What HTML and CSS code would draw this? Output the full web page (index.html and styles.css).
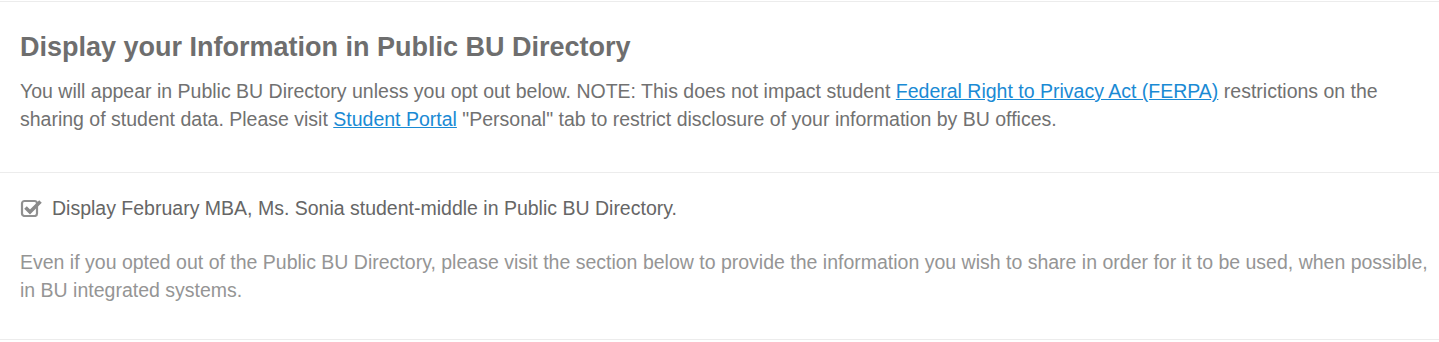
FILE: index.html
```html
<!DOCTYPE html>
<html lang="en">
<head>
    <meta charset="UTF-8">
    <title>Public BU Directory</title>
    <link rel="stylesheet" href="styles.css">
</head>
<body>

<div class="directory">
    <div class="section intro">
        <h2>Display your Information in Public BU Directory</h2>
        <p>You will appear in Public BU Directory unless you opt out below. NOTE: This does not impact student <a href="#">Federal Right to Privacy Act (FERPA)</a> restrictions on the sharing of student data. Please visit <a href="#">Student Portal</a> "Personal" tab to restrict disclosure of your information by BU offices.</p>
    </div>

    <div class="section optin">
        <label class="check-row">
            <svg class="check-icon" viewBox="0 0 22 18" width="22" height="18">
                <rect x="2" y="2" width="15" height="15" rx="2.5" fill="none" stroke="#909090" stroke-width="2.2"/>
                <path d="M5.5 8.5 L10 13 L20.5 2.5" fill="none" stroke="#8a8a8a" stroke-width="3.6"/>
            </svg>
            Display February MBA, Ms. Sonia student-middle in Public BU Directory.
        </label>
        <p class="note">Even if you opted out of the Public BU Directory, please visit the section below to provide the information you wish to share in order for it to be used, when possible, in BU integrated systems.</p>
    </div>
</div>

</body>
</html>
```

FILE: styles.css
```css
body {
    margin: 0;
    font-family: "Liberation Sans", Arial, sans-serif;
    background: #fff;
    color: #717171;
}
.directory {
    padding-top: 1px;
}
.section {
    padding: 0 8px 0 20px;
    border-top: 1px solid #ececec;
}
.section:last-child {
    border-bottom: 1px solid #ececec;
}
.intro {
    padding-top: 30px;
    padding-bottom: 39px;
}
h2 {
    margin: 0 0 14px;
    font-size: 27px;
    line-height: 31px;
    font-weight: bold;
    color: #6e6e6e;
}
p {
    margin: 0;
    font-size: 19.5px;
    line-height: 28px;
}
a {
    color: #1a8ad4;
    text-decoration: underline;
}
.optin {
    padding-top: 21px;
    padding-bottom: 35px;
}
.check-row {
    display: flex;
    align-items: center;
    gap: 10px;
    font-size: 19.5px;
    line-height: 28px;
    color: #666;
}
.check-icon {
    flex: none;
}
.note {
    margin-top: 26px;
    color: #959595;
}
```
